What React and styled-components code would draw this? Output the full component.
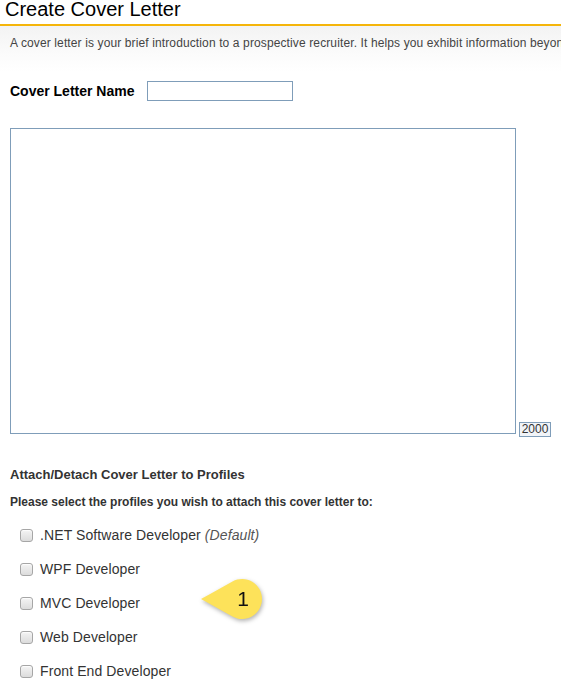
import React from 'react';
import styled, { createGlobalStyle } from 'styled-components';

const GlobalStyle = createGlobalStyle`
  body {
    margin: 0;
    background: #fff;
    font-family: "Liberation Sans", Arial, sans-serif;
  }
`;

const Page = styled.div`
  position: relative;
  width: 561px;
  height: 679px;
  overflow: hidden;
`;

const Header = styled.div`
  height: 24px;
  border-bottom: 2px solid #f5b50a;
  padding-left: 5px;
`;

const Title = styled.h1`
  margin: 0;
  font-size: 20px;
  font-weight: normal;
  line-height: 18px;
  color: #000;
`;

const Intro = styled.div`
  padding: 10px 10px 22px;
  background: linear-gradient(to bottom, #f3f3f3 0%, #fbfbfb 60%, #fff 100%);
  font-size: 12px;
  line-height: 14px;
  letter-spacing: 0.12px;
  color: #444;
  white-space: nowrap;
  overflow: hidden;
`;

const Form = styled.div`
  padding: 0 10px;
`;

const NameRow = styled.div`
  display: flex;
  align-items: center;
  gap: 12px;
  margin-top: 9px;
  height: 20px;
`;

const Label = styled.label`
  font-size: 14px;
  font-weight: bold;
  color: #000;
`;

const TextInput = styled.input`
  box-sizing: border-box;
  width: 146px;
  height: 20px;
  margin: 0;
  border: 1px solid #7f9db9;
  padding: 0 3px;
`;

const EditorRow = styled.div`
  display: flex;
  align-items: flex-end;
  gap: 3px;
  margin-top: 27px;
`;

const Editor = styled.textarea`
  box-sizing: border-box;
  width: 506px;
  height: 306px;
  margin: 0;
  border: 1px solid #7f9db9;
  resize: none;
`;

const Counter = styled.span`
  box-sizing: border-box;
  width: 32px;
  height: 15px;
  margin-bottom: -3px;
  border: 1px solid #7f9db9;
  background: #f1f4f8;
  font-size: 12px;
  line-height: 13px;
  color: #333;
  text-align: center;
`;

const SectionTitle = styled.h2`
  margin: 33px 0 0;
  font-size: 13px;
  line-height: 16px;
  font-weight: bold;
  color: #333;
`;

const Hint = styled.p`
  margin: 12px 0 0;
  font-size: 12px;
  line-height: 14px;
  font-weight: bold;
  color: #333;
`;

const ProfileList = styled.div`
  display: flex;
  flex-direction: column;
  gap: 18px;
  margin-top: 18px;
  padding-left: 10px;
`;

const ProfileRow = styled.label`
  display: flex;
  align-items: center;
  gap: 7px;
  height: 16px;
  font-size: 14px;
  line-height: 16px;
  letter-spacing: 0.1px;
  color: #333;
`;

const Check = styled.input`
  appearance: none;
  box-sizing: border-box;
  width: 13px;
  height: 13px;
  margin: 0;
  border: 1px solid #a6a6a6;
  border-radius: 3px;
  background: linear-gradient(to bottom, #f4f4f4, #dcdcdc);
  box-shadow: inset 0 1px 1px rgba(255, 255, 255, 0.8);
`;

const Note = styled.em`
  color: #555;
`;

const Callout = styled.div`
  position: absolute;
  left: 199px;
  top: 577px;
  width: 68px;
  height: 46px;
  filter: drop-shadow(1px 2px 2px rgba(0, 0, 0, 0.3));
`;

const CalloutNumber = styled.span`
  position: absolute;
  left: 24px;
  top: 0;
  width: 40px;
  height: 42px;
  font-size: 21px;
  line-height: 44px;
  text-align: center;
  color: #111;
`;

const profiles = [
  { name: '.NET Software Developer', note: '(Default)' },
  { name: 'WPF Developer' },
  { name: 'MVC Developer' },
  { name: 'Web Developer' },
  { name: 'Front End Developer' },
];

export default function App() {
  return (
    <Page>
      <GlobalStyle />
      <Header>
        <Title>Create Cover Letter</Title>
      </Header>
      <Intro>
        A cover letter is your brief introduction to a prospective recruiter. It helps you exhibit information beyond
      </Intro>
      <Form>
        <NameRow>
          <Label>Cover Letter Name</Label>
          <TextInput type="text" />
        </NameRow>
        <EditorRow>
          <Editor />
          <Counter>2000</Counter>
        </EditorRow>
        <SectionTitle>Attach/Detach Cover Letter to Profiles</SectionTitle>
        <Hint>Please select the profiles you wish to attach this cover letter to:</Hint>
        <ProfileList>
          {profiles.map((p) => (
            <ProfileRow key={p.name}>
              <Check type="checkbox" />
              <span>
                {p.name}
                {p.note && <> <Note>{p.note}</Note></>}
              </span>
            </ProfileRow>
          ))}
        </ProfileList>
      </Form>
      <Callout>
        <svg width="68" height="46" viewBox="0 0 68 46">
          <path
            d="M2 22 Q20 12 33.5 4.4 A20 20 0 1 1 33.5 39.6 Q20 32 2 22 Z"
            fill="#fde25a"
          />
        </svg>
        <CalloutNumber>1</CalloutNumber>
      </Callout>
    </Page>
  );
}
